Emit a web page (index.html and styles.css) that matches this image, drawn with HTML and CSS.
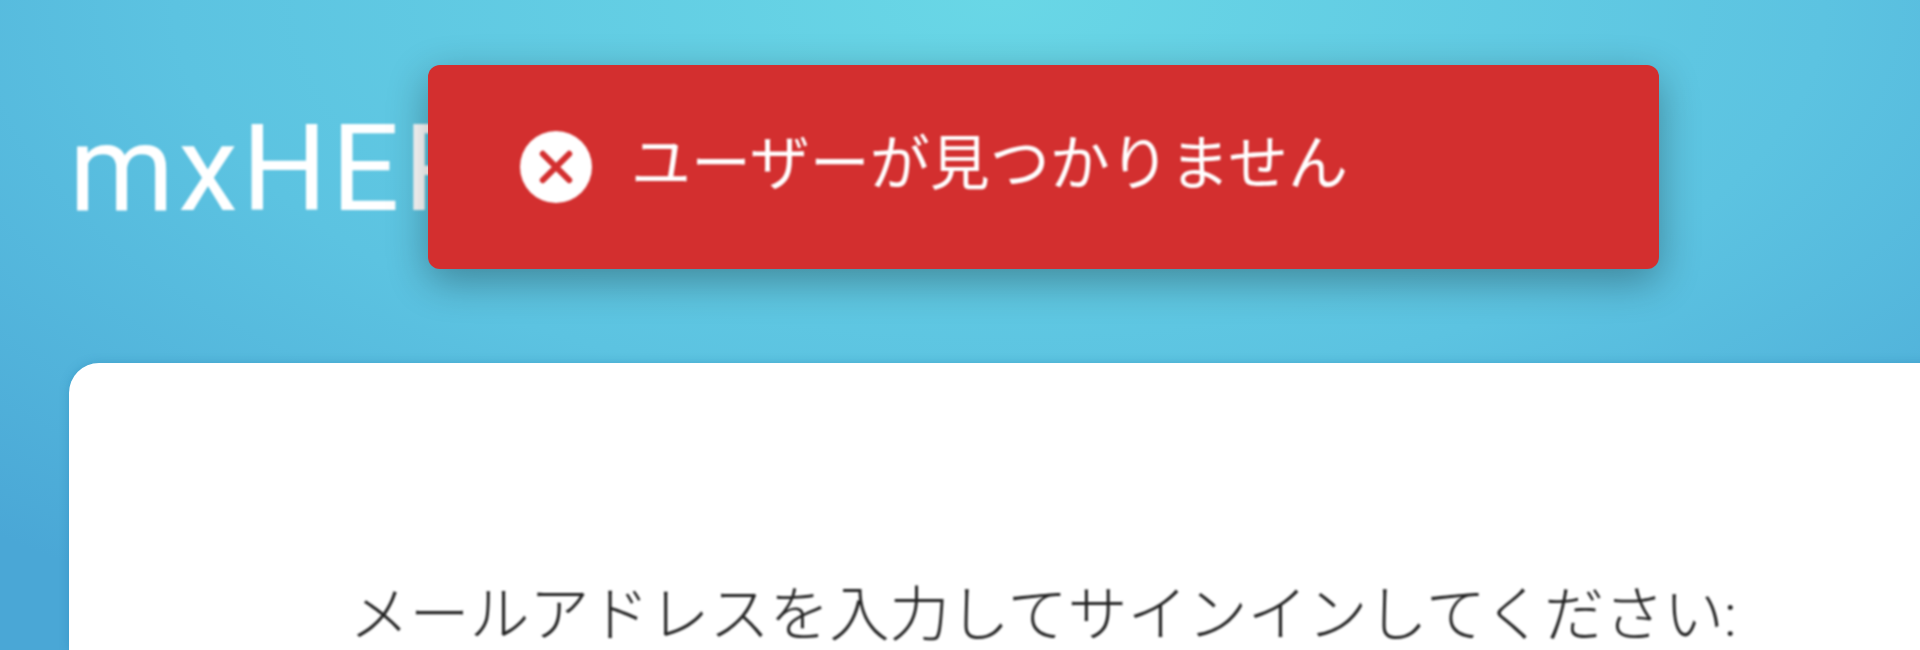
FILE: index.html
```html
<!DOCTYPE html>
<html lang="ja">
<head>
  <meta charset="UTF-8" />
  <meta name="viewport" content="width=device-width, initial-scale=1.0" />
  <title>mxHERO</title>
  <link rel="stylesheet" href="styles.css">
</head>
<body>
  <div class="page">
    <h1 class="brand">mxHERO</h1>

    <main class="card">
      <p class="prompt">メールアドレスを入力してサインインしてください:</p>
    </main>

    <div class="toast" role="alert">
      <svg class="toast-icon" viewBox="0 0 24 24" aria-hidden="true">
        <circle cx="12" cy="12" r="12" fill="#fff" />
        <path d="M7.6 7.6l8.8 8.8M16.4 7.6l-8.8 8.8" stroke="#d32f2f" stroke-width="2" stroke-linecap="round" fill="none" />
      </svg>
      <span class="toast-text">ユーザーが見つかりません</span>
    </div>
  </div>
</body>
</html>
```

FILE: styles.css
```css
html, body { margin: 0; height: 100%; overflow: hidden; }
body {
  font-family: Roboto, "Noto Sans CJK JP", sans-serif;
  background: radial-gradient(ellipse 1500px 720px at 1000px 0, #69d7e6 0%, #5cc3e1 55%, #4aa7d6 100%);
}

.page { position: relative; width: 2087px; height: 650px; padding: 74px 0 0 69px; box-sizing: border-box; overflow: hidden; }

.brand { margin: 0 0 99px 0; font-size: 120px; line-height: 190px; font-weight: 400; letter-spacing: 4px; color: #fff; filter: blur(.8px); }

.card {
  width: 1948px;
  height: 287px;
  padding-top: 213px;
  box-sizing: border-box;
  background: #fff;
  border-radius: 30px 30px 0 0;
  box-shadow: 0 0 10px rgba(30, 120, 170, .35);
  text-align: center;
}
.prompt { margin: 0; font-size: 60px; line-height: 80px; font-weight: 300; color: #222; filter: blur(.8px); }

/* sits over the heading */
.toast {
  position: absolute;
  top: 65px;
  left: 428px;
  width: 1231px;
  height: 204px;
  padding: 0 0 18px 92px;
  box-sizing: border-box;
  display: flex;
  align-items: center;
  gap: 39px;
  background: #d32f2f;
  border-radius: 12px;
  box-shadow: 0 12px 40px rgba(0, 0, 0, .32);
}
.toast-icon { width: 72px; height: 72px; margin-top: 18px; filter: blur(.8px); }
.toast-text { font-size: 60px; font-weight: 400; color: #fff; filter: blur(.8px); }
```
